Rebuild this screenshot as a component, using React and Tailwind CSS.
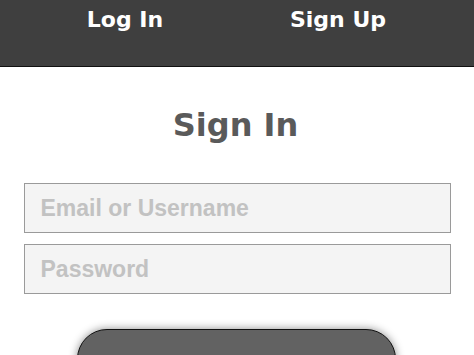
export default function App() {
  return (
    <div className="w-[474px] h-[355px] overflow-hidden bg-white relative">
      <div className="h-[67px] bg-[#3f3f3f] border-b-[1.5px] border-[#111] flex items-start pt-[6px] pl-[25px]" style={{ fontFamily: '"DejaVu Sans", Verdana, sans-serif' }}>
        <div className="w-[200px] text-center text-white font-bold text-[22px] leading-[28px]">Log In</div>
        <div className="w-[200px] ml-[13px] text-center text-white font-bold text-[22px] leading-[28px]">Sign Up</div>
      </div>
      <div className="flex flex-col items-center">
        <h1 className="mt-[38px] ml-[-3px] text-[32px] font-bold text-[#5a5a5a] leading-[40px]" style={{ fontFamily: '"DejaVu Sans", Verdana, sans-serif' }}>Sign In</h1>
        <div className="mt-[38px] w-[427px] flex flex-col gap-[11px]" style={{ fontFamily: '"Liberation Sans", Arial, sans-serif' }}>
          <div className="h-[50px] border border-[#9a9a9a] bg-[#f4f4f4] flex items-center pl-[16px] text-[23px] font-bold text-[#c2c2c2]">Email or Username</div>
          <div className="h-[50px] border border-[#9a9a9a] bg-[#f4f4f4] flex items-center pl-[16px] text-[23px] font-bold text-[#c2c2c2]">Password</div>
        </div>
        <div className="mt-[35px] w-[319px] h-[60px] rounded-[30px] bg-[#626262] border border-[#111] shadow-[0_0_8px_rgba(0,0,0,0.45)] ml-[-1px]"></div>
      </div>
    </div>
  );
}
